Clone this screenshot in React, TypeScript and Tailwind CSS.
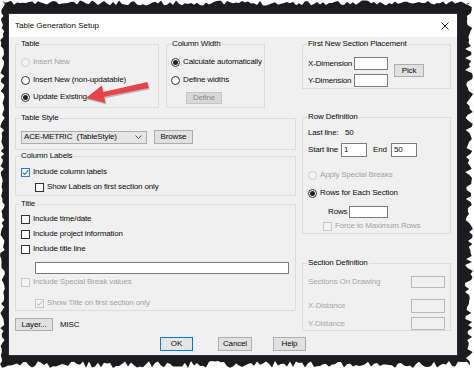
import type { ReactNode } from 'react';

// seeded jitter for the torn-paper shadow round the screenshot
function rng(seed: number) {
  let s = seed;
  return () => {
    s = (s * 16807) % 2147483647;
    return (s - 1) / 2147483646;
  };
}

function tornPath() {
  const r = rng(11);
  const pts: string[] = [];
  for (let x = 2; x <= 470; x += 3) pts.push(`${x},${(0.5 + r() * 5).toFixed(1)}`);
  for (let y = 4; y <= 364; y += 3) pts.push(`${(465 + r() * 8).toFixed(1)},${y}`);
  for (let x = 470; x >= 2; x -= 3) pts.push(`${x},${(361 + r() * 7).toFixed(1)}`);
  for (let y = 364; y >= 4; y -= 3) pts.push(`${(r() * 5).toFixed(1)},${y}`);
  return 'M' + pts.join('L') + 'Z';
}

const TORN = tornPath();

function Radio({ label, checked, disabled, className = '' }: { label: string; checked?: boolean; disabled?: boolean; className?: string }) {
  return (
    <div className={`flex items-center h-[12px] ${className}`}>
      <span
        className={`flex items-center justify-center w-[9px] h-[9px] rounded-full border ${
          disabled ? 'border-[#cccccc] bg-[#f4f4f4]' : 'border-[#333333] bg-white'
        }`}
      >
        {checked && <span className="w-[5px] h-[5px] rounded-full bg-[#222222]" />}
      </span>
      <span className={`ml-[3px] whitespace-nowrap ${disabled ? 'text-[#a3a3a3]' : ''}`}>{label}</span>
    </div>
  );
}

function Check({ label, checked, disabled, hover, className = '' }: { label: string; checked?: boolean; disabled?: boolean; hover?: boolean; className?: string }) {
  const box = disabled
    ? 'border-[#c8c8c8] bg-[#f4f4f4]'
    : hover
      ? 'border-[#2f7fc8] bg-[#f2f8fd]'
      : 'border-[#333333] bg-white';
  const mark = disabled ? '#c0c0c0' : hover ? '#2a6fb5' : '#222';
  return (
    <div className={`flex items-center h-[12px] ${className}`}>
      <span className={`flex items-center justify-center w-[9px] h-[9px] border ${box}`}>
        {checked && (
          <svg width="7" height="7" viewBox="0 0 7 7">
            <path d="M0.8 3.6 L2.7 5.5 L6.3 1.2" fill="none" stroke={mark} strokeWidth="1.1" />
          </svg>
        )}
      </span>
      <span className={`ml-[3px] whitespace-nowrap ${disabled ? 'text-[#a3a3a3]' : ''}`}>{label}</span>
    </div>
  );
}

function Btn({ children, className = '', primary, disabled }: { children: ReactNode; className?: string; primary?: boolean; disabled?: boolean }) {
  return (
    <div
      className={`flex items-center justify-center border ${
        primary ? 'border-[#0078d7] bg-[#e5e5e5]' : disabled ? 'border-[#c4c4c4] bg-[#d8d8d8] text-[#8c8c8c]' : 'border-[#adadad] bg-[#e1e1e1]'
      } ${className}`}
    >
      {children}
    </div>
  );
}

function Input({ value, className = '', disabled }: { value?: string; className?: string; disabled?: boolean }) {
  return (
    <div
      className={`flex items-center pl-[2px] border ${
        disabled ? 'border-[#b9b9b9] bg-[#f0f0f0]' : 'border-[#7a7a7a] bg-white'
      } ${className}`}
    >
      {value}
    </div>
  );
}

function Group({ title, className = '', children }: { title: string; className?: string; children: ReactNode }) {
  return (
    <fieldset className={`min-w-0 border border-[#dcdcdc] ${className}`}>
      <legend className="ml-[4px] px-[1px] h-[10px] leading-[10px]">{title}</legend>
      {children}
    </fieldset>
  );
}

export default function App() {
  return (
    <div className="relative w-[474px] h-[372px] overflow-hidden bg-white pl-[8px] pt-[13px] font-['Liberation_Sans',Arial,sans-serif]">
      <svg className="absolute left-0 top-0" width="474" height="372">
        <path d={TORN} fill="#1c1c1e" />
      </svg>

      <div className="relative flex flex-col w-[450px] h-[343px] border border-[#2e2a36] bg-[#f0f0f0] text-[8px] leading-[12px] tracking-[-0.15px] text-[#0a0a0a]">
        {/* Title bar */}
        <div className="flex items-center justify-between h-[23px] bg-white pl-[6px] pr-[8px]">
          <span className="tracking-normal">Table Generation Setup</span>
          <svg width="8" height="8" viewBox="0 0 8 8">
            <path d="M0.5 0.5 L7.5 7.5 M7.5 0.5 L0.5 7.5" stroke="#222" strokeWidth="1" />
          </svg>
        </div>

        <div className="flex flex-col pl-[6px] pt-[2px]">
          <div className="flex gap-[6px]">
            {/* Left column */}
            <div className="flex flex-col w-[281px]">
              <div className="flex gap-[7px]">
                <Group title="Table" className="w-[144px] h-[69px]">
                  <div className="flex flex-col pl-[5px] pt-[7px]">
                    <Radio disabled label="Insert New" />
                    <Radio className="mt-[6px]" label="Insert New (non-updatable)" />
                    <Radio className="mt-[5px]" checked label="Update Existing" />
                  </div>
                </Group>
                <Group title="Column Width" className="w-[99px] h-[69px]">
                  <div className="flex flex-col pl-[4px] pt-[7px]">
                    <Radio checked label="Calculate automatically" />
                    <Radio className="mt-[6px]" label="Define widths" />
                    <Btn disabled className="ml-[15px] mt-[6px] w-[36px] h-[12px]">
                      Define
                    </Btn>
                  </div>
                </Group>
              </div>

              <Group title="Table Style" className="mt-[5px] h-[37px]">
                <div className="flex items-center pl-[5px] pt-[7px]">
                  <div className="flex items-center justify-between w-[126px] h-[13px] border border-[#adadad] bg-[#e6e6e6] pl-[2px] pr-[4px]">
                    <span className="whitespace-pre">ACE-METRIC  (TableStyle)</span>
                    <svg width="7" height="4" viewBox="0 0 7 4">
                      <path d="M0.5 0.5 L3.5 3.5 L6.5 0.5" fill="none" stroke="#444" strokeWidth="0.9" />
                    </svg>
                  </div>
                  <Btn className="ml-[7px] w-[39px] h-[14px]">Browse</Btn>
                </div>
              </Group>

              <Group title="Column Labels" className="mt-[1px] h-[45px]">
                <div className="flex flex-col pl-[5px] pt-[5px]">
                  <Check checked hover label="Include column labels" />
                  <Check className="ml-[14px] mt-[3px]" label="Show Labels on first section only" />
                </div>
              </Group>

              <Group title="Title" className="mt-[3px] h-[112px]">
                <div className="flex flex-col pl-[5px] pt-[4px]">
                  <Check label="Include time/date" />
                  <Check className="mt-[3px]" label="Include project information" />
                  <Check className="mt-[3px]" label="Include title line" />
                  <Input className="ml-[14px] mt-[7px] w-[254px] h-[12px]" />
                  <Check disabled className="mt-[2px]" label="Include Special Break values" />
                  <Check disabled checked className="ml-[14px] mt-[9px]" label="Show Title on first section only" />
                </div>
              </Group>

              <div className="flex items-center mt-[7px]">
                <Btn className="w-[38px] h-[13px]">Layer...</Btn>
                <span className="ml-[7px]">MISC</span>
              </div>
            </div>

            {/* Right column */}
            <div className="flex flex-col w-[149px]">
              <Group title="First New Section Placement" className="h-[50px]">
                <div className="flex items-start pl-[5px] pt-[8px]">
                  <div className="grid grid-cols-[46px_34px] items-center gap-y-[4px]">
                    <span>X-Dimension</span>
                    <Input className="h-[13px]" />
                    <span>Y-Dimension</span>
                    <Input className="h-[13px]" />
                  </div>
                  <Btn className="ml-[6px] mt-[7px] w-[30px] h-[13px]">Pick</Btn>
                </div>
              </Group>

              <Group title="Row Definition" className="mt-[23px] h-[122px]">
                <div className="flex flex-col pl-[5px] pt-[5px]">
                  <div className="flex h-[12px] items-center">
                    <span className="w-[37px]">Last line:</span>
                    <span>50</span>
                  </div>
                  <div className="flex items-center h-[14px] mt-[4px]">
                    <span className="w-[33px]">Start line</span>
                    <Input value="1" className="w-[26px] h-[14px]" />
                    <span className="ml-[6px] w-[18px]">End</span>
                    <Input value="50" className="w-[26px] h-[14px]" />
                  </div>
                  <Radio disabled className="mt-[12px]" label="Apply Special Breaks" />
                  <Radio checked className="mt-[6px]" label="Rows for Each Section" />
                  <div className="flex items-center h-[12px] mt-[7px] ml-[20px]">
                    <span className="w-[21px] pr-[2px]">Rows</span>
                    <Input className="w-[39px] h-[12px]" />
                  </div>
                  <Check disabled className="ml-[15px] mt-[2px]" label="Force to Maximum Rows" />
                </div>
              </Group>

              <Group title="Section Definition" className="mt-[24px] h-[73px]">
                <div className="flex flex-col px-[5px] pt-[8px] text-[#a8a8a8]">
                  <div className="flex items-center justify-between h-[12px]">
                    <span>Sections On Drawing</span>
                    <Input disabled className="w-[34px] h-[12px]" />
                  </div>
                  <div className="flex items-center justify-between h-[14px] mt-[11px]">
                    <span>X-Distance</span>
                    <Input disabled className="w-[34px] h-[14px]" />
                  </div>
                  <div className="flex items-center justify-between h-[13px] mt-[4px]">
                    <span>Y-Distance</span>
                    <Input disabled className="w-[34px] h-[13px]" />
                  </div>
                </div>
              </Group>
            </div>
          </div>

          {/* Dialog buttons */}
          <div className="flex mt-[6px]">
            <Btn primary className="ml-[145px] w-[33px] h-[14px]">OK</Btn>
            <Btn className="ml-[25px] w-[34px] h-[14px]">Cancel</Btn>
            <Btn className="ml-[21px] w-[33px] h-[14px]">Help</Btn>
          </div>
        </div>
      </div>

      {/* red callout arrow */}
      <svg className="absolute left-0 top-0 pointer-events-none" width="474" height="372">
        <polygon points="87,99.5 102.8,87 104.1,93.4 148.4,83.6 149.6,89.4 105.1,98.2 106.4,104.6" fill="rgba(0,0,0,0.22)" />
        <polygon points="86,98 101.8,85.5 103.1,91.9 147.4,82.1 148.6,87.9 104.1,96.7 105.4,103.1" fill="#e8424a" />
      </svg>
    </div>
  );
}
